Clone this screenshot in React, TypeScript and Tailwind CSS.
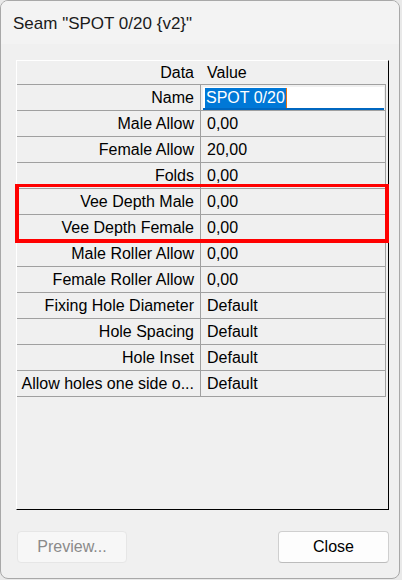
const rows: { label: string; value: string }[] = [
  { label: "Name", value: "SPOT 0/20" },
  { label: "Male Allow", value: "0,00" },
  { label: "Female Allow", value: "20,00" },
  { label: "Folds", value: "0,00" },
  { label: "Vee Depth Male", value: "0,00" },
  { label: "Vee Depth Female", value: "0,00" },
  { label: "Male Roller Allow", value: "0,00" },
  { label: "Female Roller Allow", value: "0,00" },
  { label: "Fixing Hole Diameter", value: "Default" },
  { label: "Hole Spacing", value: "Default" },
  { label: "Hole Inset", value: "Default" },
  { label: "Allow holes one side o...", value: "Default" },
]

const PropRow = ({ label, value, editing }: { label: string; value: string; editing?: boolean }) => {
  return (
    <div className="flex h-[26px]">
      <div className="w-[184px] flex items-center justify-end pr-[6px] pt-px border-b border-r border-[#a0a0a0] whitespace-nowrap overflow-hidden">
        {label}
      </div>
      <div className="w-[185px] flex items-center border-b border-r border-[#a0a0a0]">
        {editing ? (
          <div className="h-full w-full pl-[2px] pr-[1px] pt-[2px]">
            <div className="h-full w-full bg-white border-b-2 border-[#0067c0] flex items-center pl-[2px]">
              <span className="bg-[#0078d7] text-white leading-[20px] px-px">{value}</span>
              <span className="w-px h-[20px] bg-[#e8700d]" />
            </div>
          </div>
        ) : (
          <span className="pl-[6px] pt-px">{value}</span>
        )}
      </div>
    </div>
  )
}

export default function App() {
  return (
    <div className="relative w-[402px] h-[580px] bg-[#e9e9e9] overflow-hidden" style={{ fontFamily: '"Liberation Sans", Arial, sans-serif' }}>
      <div className="w-[400px] h-[579px] rounded-[8px] border border-[#a8a8a8] bg-[#f0f0f0] flex flex-col overflow-hidden">
        {/* title bar */}
        <div className="h-[43px] shrink-0 bg-[#f3f3f3] flex items-center pl-[12px] pt-[2px] text-[17px] text-[#1b1b1b]">
          Seam "SPOT 0/20 {"{"}v2{"}"}"
        </div>

        <div className="flex flex-col pl-[15px] pt-[16px]">
          {/* property grid */}
          <div className="w-[373px] h-[450px] border-t border-l border-white border-r border-b border-r-black border-b-black bg-[#f0f0f0] text-[16px] text-black">
            <div className="flex h-[24px] w-[369px] border-b border-[#a0a0a0]">
              <div className="w-[184px] flex items-center justify-end pr-[7px] pt-px">Data</div>
              <div className="flex items-center pl-[6px] pt-px">Value</div>
            </div>
            {rows.map((r, i) => (
              <PropRow key={r.label} label={r.label} value={r.value} editing={i === 0} />
            ))}
          </div>

          {/* buttons */}
          <div className="flex justify-between w-[373px] mt-[21px]">
            <button className="ml-px w-[110px] h-[32px] rounded-[4px] bg-[#f7f7f7] border border-[#e6e6e6] text-[16px] text-[#8a8a8a]">
              Preview...
            </button>
            <button className="w-[111px] h-[32px] rounded-[4px] bg-[#fdfdfd] border border-[#cfcfcf] border-b-[#bcbcbc] text-[16px] text-black">
              Close
            </button>
          </div>
        </div>
      </div>

      {/* highlight box drawn over the grid */}
      <div className="absolute left-[15px] top-[184px] w-[374px] h-[59px] border-4 border-t-[3px] border-[#ff0000]" />
    </div>
  )
}
